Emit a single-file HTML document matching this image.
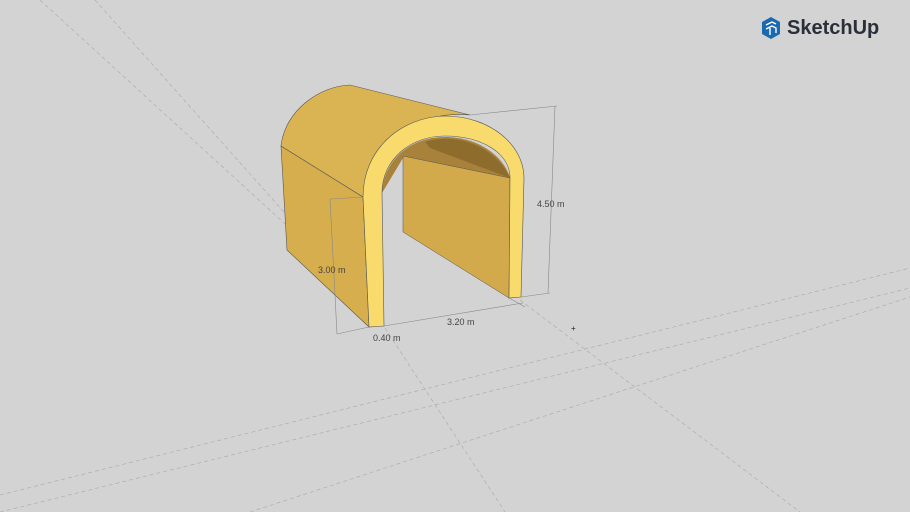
<!DOCTYPE html>
<html><head><style>
html,body{margin:0;padding:0;width:910px;height:512px;overflow:hidden;background:#d3d3d3;font-family:"Liberation Sans",sans-serif}
.logo{position:absolute;left:760px;top:16px;display:flex;align-items:center;gap:5px;font-size:20px;font-weight:bold;color:#2a2f3a}
</style></head><body>
<svg width="910" height="512" style="position:absolute;left:0;top:0">
<g stroke="#a8a8a8" stroke-width="0.6" fill="none" stroke-dasharray="4,3">
<line x1="40" y1="0" x2="330" y2="265"/>
<line x1="95" y1="0" x2="300" y2="230"/>
<line x1="0" y1="495" x2="910" y2="268"/>
<line x1="0" y1="512" x2="910" y2="288"/>
<line x1="250" y1="512" x2="910" y2="297"/>
<line x1="385" y1="328" x2="505" y2="512"/>
<line x1="520" y1="300" x2="800" y2="512"/>
</g>
<polygon points="281,146 287,250 369,327 363,197" fill="#d6ae4e" stroke="#555" stroke-width="0.6"/>
<path d="M281,146 C285,110 320,86 350,85 L470,115 C420,110 370,140 363,197 Z" fill="#dab453" stroke="#555" stroke-width="0.6"/>
<path d="M382,193 C384,160 410,137 445,137 C480,137 505,158 510,178 L403,158 Z" fill="#a8823a"/>
<path d="M425,142 C455,132 495,145 510,178 L430,148 Z" fill="#8e6c2c"/>
<polygon points="403,156 510,178 509,298 403,232" fill="#d2aa4c" stroke="#555" stroke-width="0.5"/>
<path d="M363,197 C363,150 400,117 445,116 C490,116 524,145 524,178 L521,297 L509,298 L510,178 C510,152 480,136 445,136 C410,136 382,160 382,193 L384,326 L369,327 Z" fill="#f9da6c" stroke="#555" stroke-width="0.6"/>
<g stroke="#888" stroke-width="0.6" fill="none">
<line x1="470" y1="115" x2="557" y2="106"/>
<line x1="555" y1="106" x2="548" y2="293"/>
<line x1="521" y1="297" x2="550" y2="293"/>
<line x1="330" y1="199" x2="337" y2="334"/>
<line x1="330" y1="199" x2="363" y2="197"/>
<line x1="337" y1="334" x2="369" y2="327"/>
<line x1="384" y1="326" x2="523" y2="303"/>
<line x1="509" y1="298" x2="525" y2="307"/>
</g>
<g font-size="9" fill="#444" font-family="Liberation Sans,sans-serif">
<text x="537" y="207">4.50 m</text>
<text x="318" y="273">3.00 m</text>
<text x="447" y="325">3.20 m</text>
<text x="373" y="341">0.40 m</text>
</g>
<text x="571" y="331" font-size="8" fill="#222">+</text>
</svg>
<div class="logo">
<svg width="22" height="24" viewBox="0 0 22 24"><path d="M11 1 L20 6 L20 18 L11 23 L2 18 L2 6 Z" fill="#1b6ab0"/><path d="M6 9 L12 6 L16 8 M6 13 L12 10 L16 12 L16 17 M10 12 L10 19" stroke="#fff" stroke-width="1.4" fill="none"/></svg>
<span>SketchUp</span></div>
</body></html>
